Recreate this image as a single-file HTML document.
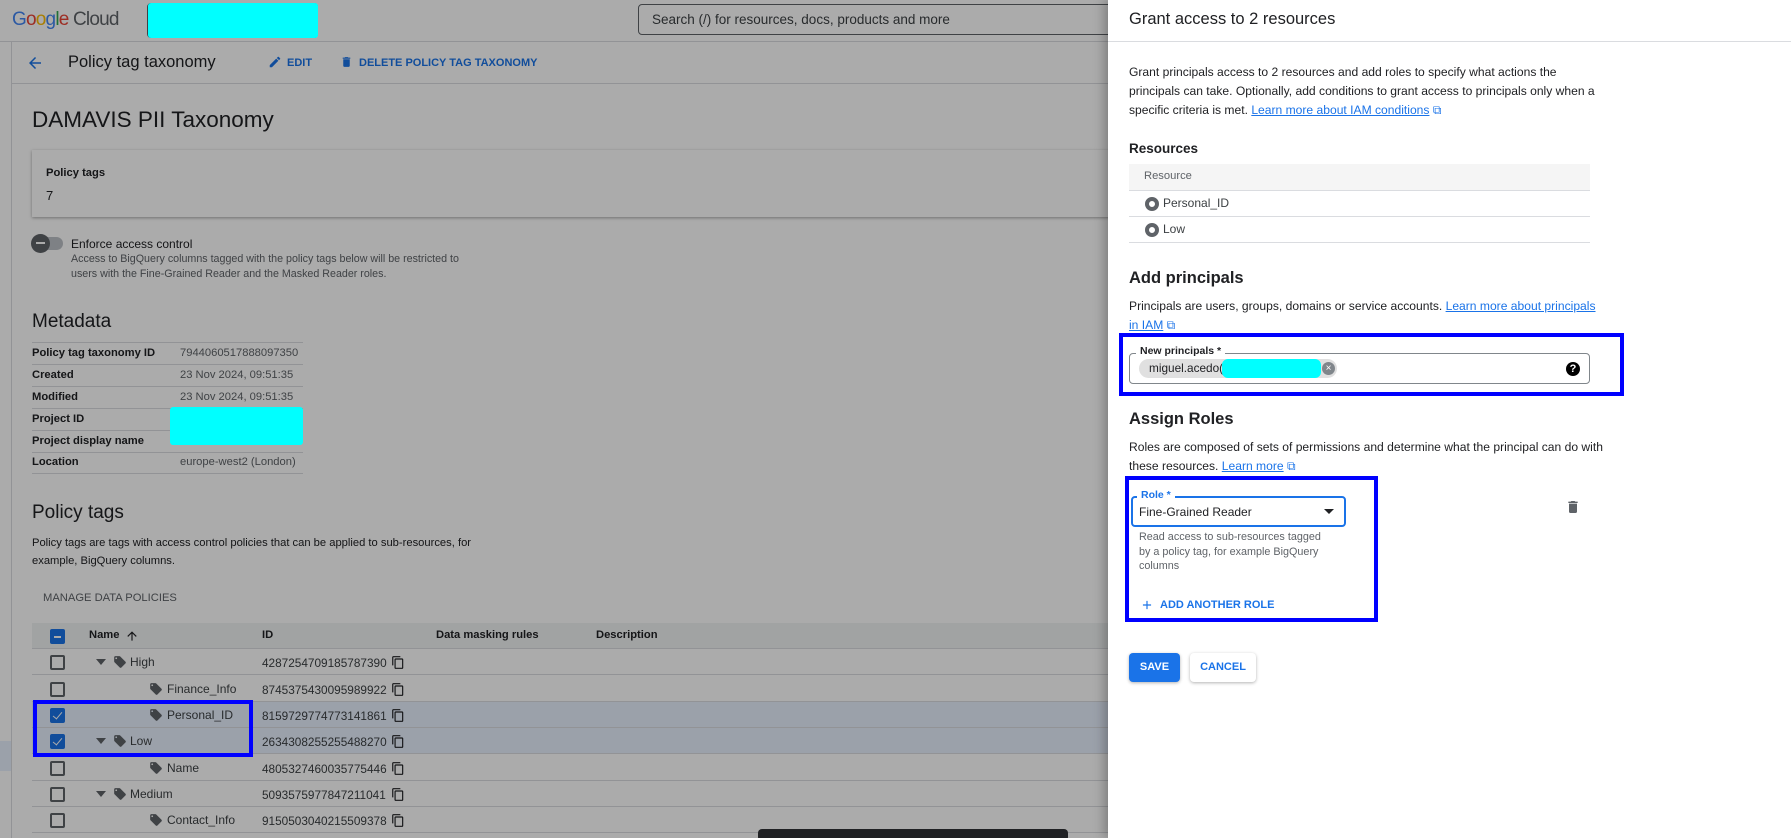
<!DOCTYPE html>
<html><head><meta charset="utf-8">
<style>
*{box-sizing:border-box;margin:0;padding:0}
body{width:1791px;height:838px;overflow:hidden;position:relative;font-family:"Liberation Sans",Arial,sans-serif;background:#fff;color:#202124}
.a{position:absolute;white-space:nowrap}
#left{position:absolute;left:0;top:0;width:1108px;height:838px;background:#fff;overflow:hidden}
#ov{position:absolute;left:0;top:0;width:1108px;height:838px;background:rgba(0,0,0,0.33)}
.mrow{position:absolute;left:32px;width:271px;height:22px;border-bottom:1px solid #dadce0;font-size:11.2px}
.mrow b{position:absolute;left:0;top:4px;font-weight:bold;color:#202124}
.mrow span{position:absolute;left:148px;top:4px;color:#5f6368}
.tr{position:absolute;left:32px;width:1076px;height:26.3px;border-bottom:1px solid #dadce0;font-size:12px;color:#3c4043}
.cb{position:absolute;left:18px;top:6px;width:15px;height:15px;border:2px solid #5f6368;border-radius:2px}
.cb.on{background:#1a73e8;border-color:#1a73e8}
.cb.on::after{content:"";position:absolute;left:3px;top:0px;width:4px;height:8px;border-right:1.5px solid #fff;border-bottom:1.5px solid #fff;transform:rotate(40deg)}
.tri{position:absolute;width:0;height:0;border-left:5px solid transparent;border-right:5px solid transparent;border-top:6px solid #5f6368;top:10px}
.tag{position:absolute;top:6px;width:14px;height:14px}
.id{position:absolute;left:230px;top:7px;font-size:11.8px}
.cp{position:absolute;left:359px;top:6px;width:14px;height:15px}
#panel{position:absolute;left:1108px;top:0;width:683px;height:838px;background:#fff;box-shadow:-4px 0 10px rgba(0,0,0,0.25)}
.p{font-size:12.1px;color:#202124;line-height:19px}
.lnk{color:#1a73e8;text-decoration:underline}
</style></head><body>
<svg width="0" height="0" style="position:absolute">
 <defs>
  <symbol id="tg" viewBox="0 0 24 24"><path d="M21.41 11.58l-9-9C12.05 2.22 11.55 2 11 2H4c-1.1 0-2 .9-2 2v7c0 .55.22 1.05.59 1.42l9 9c.36.36.86.58 1.41.58s1.05-.22 1.41-.59l7-7c.37-.36.59-.86.59-1.41s-.23-1.06-.59-1.42zM5.5 7C4.67 7 4 6.33 4 5.5S4.67 4 5.5 4 7 4.67 7 5.5 6.33 7 5.5 7z" fill="#5f6368"/></symbol>
  <symbol id="cpy" viewBox="0 0 24 24"><path d="M16 1H4c-1.1 0-2 .9-2 2v14h2V3h12V1zm3 4H8c-1.1 0-2 .9-2 2v14c0 1.1.9 2 2 2h11c1.1 0 2-.9 2-2V7c0-1.1-.9-2-2-2zm0 16H8V7h11v14z" fill="#202124"/></symbol>
 </defs>
</svg>
<div id="left">
 <div class="a" style="left:12px;top:9px;font-size:19px;letter-spacing:-0.8px"><span style="color:#4285f4">G</span><span style="color:#ea4335">o</span><span style="color:#fbbc04">o</span><span style="color:#4285f4">g</span><span style="color:#34a853">l</span><span style="color:#ea4335">e</span> <span style="color:#5f6368">Cloud</span></div>
 <div class="a" style="left:147px;top:3px;width:171px;height:35px;border:1px solid #5f6368;border-radius:4px"></div>
 <div class="a" style="left:638px;top:4px;width:480px;height:31px;border:1px solid #5f6368;border-radius:4px;background:#fff"></div>
 <div class="a" style="left:652px;top:12px;font-size:13.5px;color:#3c4043">Search (/) for resources, docs, products and more</div>
 <div class="a" style="left:0;top:41px;width:1108px;height:1px;background:#dadce0"></div>
 <div class="a" style="left:11px;top:42px;width:1px;height:796px;background:#dadce0"></div>
 <svg class="a" style="left:26px;top:54px" width="18" height="18" viewBox="0 0 24 24"><path d="M20 11H7.83l5.59-5.59L12 4l-8 8 8 8 1.41-1.41L7.83 13H20v-2z" fill="#1a73e8"/></svg>
 <div class="a" style="left:68px;top:53px;font-size:16.5px;color:#202124">Policy tag taxonomy</div>
 <svg class="a" style="left:268px;top:55px" width="14" height="14" viewBox="0 0 24 24"><path d="M3 17.25V21h3.75L17.8 9.94l-3.75-3.75L3 17.25zM20.7 7.04a1 1 0 000-1.41l-2.34-2.34a1 1 0 00-1.41 0l-1.83 1.83 3.75 3.75 1.83-1.83z" fill="#1a73e8"/></svg>
 <div class="a" style="left:287px;top:57px;font-size:11px;font-weight:bold;color:#1a73e8">EDIT</div>
 <svg class="a" style="left:340px;top:54px" width="13" height="16" viewBox="0 0 24 24"><path d="M6 19c0 1.1.9 2 2 2h8c1.1 0 2-.9 2-2V7H6v12zM19 4h-3.5l-1-1h-5l-1 1H5v2h14V4z" fill="#1a73e8"/></svg>
 <div class="a" style="left:359px;top:57px;font-size:11px;font-weight:bold;color:#1a73e8">DELETE POLICY TAG TAXONOMY</div>
 <div class="a" style="left:12px;top:83px;width:1096px;height:1px;background:#dadce0"></div>
 <div class="a" style="left:32px;top:107px;font-size:22.5px">DAMAVIS PII Taxonomy</div>
 <div class="a" style="left:32px;top:150px;width:1090px;height:67px;background:#fff;box-shadow:0 1px 3px rgba(0,0,0,0.35)"></div>
 <div class="a" style="left:46px;top:167px;font-size:11.2px;font-weight:bold">Policy tags</div>
 <div class="a" style="left:46px;top:188px;font-size:13px">7</div>
 <div class="a" style="left:33px;top:237px;width:30px;height:13px;border-radius:7px;background:#bdc1c6"></div>
 <div class="a" style="left:31px;top:234px;width:19px;height:19px;border-radius:50%;background:#5f6368"></div>
 <div class="a" style="left:36px;top:242px;width:9px;height:2px;background:#fff"></div>
 <div class="a" style="left:71px;top:237px;font-size:12px">Enforce access control</div>
 <div class="a" style="left:71px;top:252px;font-size:10.7px;color:#5f6368;line-height:14.5px">Access to BigQuery columns tagged with the policy tags below will be restricted to<br>users with the Fine-Grained Reader and the Masked Reader roles.</div>
 <div class="a" style="left:32px;top:311px;font-size:19px">Metadata</div>
 <div class="a" style="left:32px;top:342px;width:271px;height:1px;background:#dadce0"></div>
 <div class="mrow" style="top:343px"><b>Policy tag taxonomy ID</b><span>7944060517888097350</span></div>
 <div class="mrow" style="top:365px"><b>Created</b><span>23 Nov 2024, 09:51:35</span></div>
 <div class="mrow" style="top:387px"><b>Modified</b><span>23 Nov 2024, 09:51:35</span></div>
 <div class="mrow" style="top:409px"><b>Project ID</b></div>
 <div class="mrow" style="top:431px"><b>Project display name</b></div>
 <div class="mrow" style="top:452px"><b>Location</b><span>europe-west2 (London)</span></div>
 <div class="a" style="left:32px;top:502px;font-size:19px">Policy tags</div>
 <div class="a" style="left:32px;top:534px;font-size:11.2px;line-height:18px">Policy tags are tags with access control policies that can be applied to sub-resources, for<br>example, BigQuery columns.</div>
 <div class="a" style="left:43px;top:592px;font-size:11.2px;color:#5f6368">MANAGE DATA POLICIES</div>
 <div class="a" style="left:32px;top:623px;width:1076px;height:26px;background:#f1f3f4;border-bottom:1px solid #dadce0"></div>
 <div class="a" style="left:50px;top:629px;width:15px;height:15px;background:#1a73e8;border-radius:2px"></div>
 <div class="a" style="left:54px;top:636px;width:7px;height:2px;background:#fff"></div>
 <div class="a" style="left:89px;top:629px;font-size:11.2px;font-weight:bold">Name</div>
 <svg class="a" style="left:125px;top:628px" width="14" height="16" viewBox="0 0 24 24"><path d="M4 12l1.41 1.41L11 7.83V20h2V7.83l5.58 5.59L20 12l-8-8-8 8z" fill="#202124"/></svg>
 <div class="a" style="left:262px;top:629px;font-size:11.2px;font-weight:bold">ID</div>
 <div class="a" style="left:436px;top:629px;font-size:11.2px;font-weight:bold">Data masking rules</div>
 <div class="a" style="left:596px;top:629px;font-size:11.2px;font-weight:bold">Description</div>

 <div class="tr" style="top:649px"><div class="cb"></div><div class="tri" style="left:64px"></div><svg class="tag" style="left:81px"><use href="#tg"/></svg><div class="a" style="left:98px;top:6px">High</div><div class="id">4287254709185787390</div><svg class="cp"><use href="#cpy"/></svg></div>
 <div class="tr" style="top:676px"><div class="cb"></div><svg class="tag" style="left:117px"><use href="#tg"/></svg><div class="a" style="left:135px;top:6px">Finance_Info</div><div class="id">8745375430095989922</div><svg class="cp"><use href="#cpy"/></svg></div>
 <div class="tr" style="top:702px;background:#e8f0fe"><div class="cb on"></div><svg class="tag" style="left:117px"><use href="#tg"/></svg><div class="a" style="left:135px;top:6px">Personal_ID</div><div class="id">8159729774773141861</div><svg class="cp"><use href="#cpy"/></svg></div>
 <div class="tr" style="top:728px;background:#e8f0fe"><div class="cb on"></div><div class="tri" style="left:64px"></div><svg class="tag" style="left:81px"><use href="#tg"/></svg><div class="a" style="left:98px;top:6px">Low</div><div class="id">2634308255255488270</div><svg class="cp"><use href="#cpy"/></svg></div>
 <div class="tr" style="top:755px"><div class="cb"></div><svg class="tag" style="left:117px"><use href="#tg"/></svg><div class="a" style="left:135px;top:6px">Name</div><div class="id">4805327460035775446</div><svg class="cp"><use href="#cpy"/></svg></div>
 <div class="tr" style="top:781px"><div class="cb"></div><div class="tri" style="left:64px"></div><svg class="tag" style="left:81px"><use href="#tg"/></svg><div class="a" style="left:98px;top:6px">Medium</div><div class="id">5093575977847211041</div><svg class="cp"><use href="#cpy"/></svg></div>
 <div class="tr" style="top:807px"><div class="cb"></div><svg class="tag" style="left:117px"><use href="#tg"/></svg><div class="a" style="left:135px;top:6px">Contact_Info</div><div class="id">9150503040215509378</div><svg class="cp"><use href="#cpy"/></svg></div>
 <div class="a" style="left:0;top:741px;width:11px;height:30px;background:#e8f0fe"></div>
 <div id="ov"></div>
 <div class="a" style="left:148px;top:3px;width:170px;height:35px;background:#00ffff;border-radius:3px"></div>
 <div class="a" style="left:170px;top:407px;width:133px;height:38px;background:#00ffff;border-radius:3px"></div>
 <div class="a" style="left:33px;top:700px;width:220px;height:57px;border:4px solid #0000ff"></div>
 <div class="a" style="left:758px;top:829px;width:310px;height:12px;background:#202124;border-radius:4px"></div>
</div>

<div id="panel">
 <div class="a" style="left:21px;top:10px;font-size:16.5px">Grant access to 2 resources</div>
 <div class="a" style="left:0;top:41px;width:683px;height:1px;background:#dadce0"></div>
 <div class="a p" style="left:21px;top:63px">Grant principals access to 2 resources and add roles to specify what actions the<br>principals can take. Optionally, add conditions to grant access to principals only when a<br>specific criteria is met. <span class="lnk">Learn more about IAM conditions</span> <span style="color:#1a73e8">&#x29C9;</span></div>
 <div class="a" style="left:21px;top:141px;font-size:13.5px;font-weight:bold">Resources</div>
 <div class="a" style="left:21px;top:164px;width:461px;height:27px;background:#f5f5f5;border-bottom:1px solid #dadce0"></div>
 <div class="a" style="left:36px;top:170px;font-size:11.2px;color:#5f6368">Resource</div>
 <div class="a" style="left:21px;top:191px;width:461px;height:26px;border-bottom:1px solid #dadce0"></div>
 <div class="a" style="left:21px;top:217px;width:461px;height:26px;border-bottom:1px solid #dadce0"></div>
 <div class="a" style="left:37px;top:197px;width:14px;height:14px;border-radius:50%;border:4px solid #5f6368;background:#fff"></div>
 <div class="a" style="left:37px;top:223px;width:14px;height:14px;border-radius:50%;border:4px solid #5f6368;background:#fff"></div>
 <div class="a" style="left:55px;top:196px;font-size:12px;color:#3c4043">Personal_ID</div>
 <div class="a" style="left:55px;top:222px;font-size:12px;color:#3c4043">Low</div>
 <div class="a" style="left:21px;top:269px;font-size:16.5px;font-weight:bold">Add principals</div>
 <div class="a p" style="left:21px;top:297px">Principals are users, groups, domains or service accounts. <span class="lnk">Learn more about principals</span><br><span class="lnk">in IAM</span> <span style="color:#1a73e8">&#x29C9;</span></div>
 <div class="a" style="left:11px;top:333px;width:505px;height:63px;border:4px solid #0000ff"></div>
 <div class="a" style="left:21px;top:353px;width:461px;height:31px;border:1px solid #80868b;border-radius:4px"></div>
 <div class="a" style="left:28px;top:345px;padding:0 4px;background:#fff;font-size:10.5px;font-weight:bold;color:#202124">New principals *</div>
 <div class="a" style="left:31px;top:359px;width:198px;height:19px;border-radius:10px;background:#e0e0e0"></div>
 <div class="a" style="left:41px;top:361px;font-size:11.8px">miguel.acedo(</div>
 <div class="a" style="left:114px;top:359px;width:99px;height:19px;background:#00ffff;border-radius:6px"></div>
 <div class="a" style="left:214px;top:362px;width:13px;height:13px;border-radius:50%;background:#80868b;color:#fff;font-size:10px;text-align:center;line-height:13px">×</div>
 <div class="a" style="left:458px;top:362px;width:14px;height:14px;border-radius:50%;background:#000;color:#fff;font-size:11px;font-weight:bold;text-align:center;line-height:14px">?</div>
 <div class="a" style="left:21px;top:410px;font-size:16.5px;font-weight:bold">Assign Roles</div>
 <div class="a p" style="left:21px;top:438px">Roles are composed of sets of permissions and determine what the principal can do with<br>these resources. <span class="lnk">Learn more</span> <span style="color:#1a73e8">&#x29C9;</span></div>
 <div class="a" style="left:17px;top:476px;width:253px;height:146px;border:4px solid #0000ff"></div>
 <div class="a" style="left:23px;top:496px;width:215px;height:31px;border:2px solid #1a73e8;border-radius:4px"></div>
 <div class="a" style="left:29px;top:489px;padding:0 4px;background:#fff;font-size:10.5px;font-weight:bold;color:#1a73e8">Role *</div>
 <div class="a" style="left:31px;top:505px;font-size:12px">Fine-Grained Reader</div>
 <div class="a" style="left:216px;top:509px;width:0;height:0;border-left:5px solid transparent;border-right:5px solid transparent;border-top:5px solid #202124"></div>
 <div class="a" style="left:31px;top:530px;font-size:10.8px;color:#5f6368;line-height:14.5px">Read access to sub-resources tagged<br>by a policy tag, for example BigQuery<br>columns</div>
 <svg class="a" style="left:32px;top:598px" width="14" height="14" viewBox="0 0 24 24"><path d="M19 13h-6v6h-2v-6H5v-2h6V5h2v6h6v2z" fill="#1a73e8"/></svg>
 <div class="a" style="left:52px;top:599px;font-size:11px;font-weight:bold;color:#1a73e8">ADD ANOTHER ROLE</div>
 <svg class="a" style="left:457px;top:498px" width="16" height="18" viewBox="0 0 24 24"><path d="M6 19c0 1.1.9 2 2 2h8c1.1 0 2-.9 2-2V7H6v12zM19 4h-3.5l-1-1h-5l-1 1H5v2h14V4z" fill="#5f6368"/></svg>
 <div class="a" style="left:21px;top:653px;width:51px;height:29px;background:#1a73e8;border-radius:4px;box-shadow:0 1px 3px rgba(0,0,0,0.3);color:#fff;font-size:11px;font-weight:bold;text-align:center;line-height:29px">SAVE</div>
 <div class="a" style="left:82px;top:653px;width:66px;height:29px;background:#fff;border-radius:4px;box-shadow:0 1px 3px rgba(0,0,0,0.3);color:#1a73e8;font-size:11px;font-weight:bold;text-align:center;line-height:29px">CANCEL</div>
</div>
</body></html>
